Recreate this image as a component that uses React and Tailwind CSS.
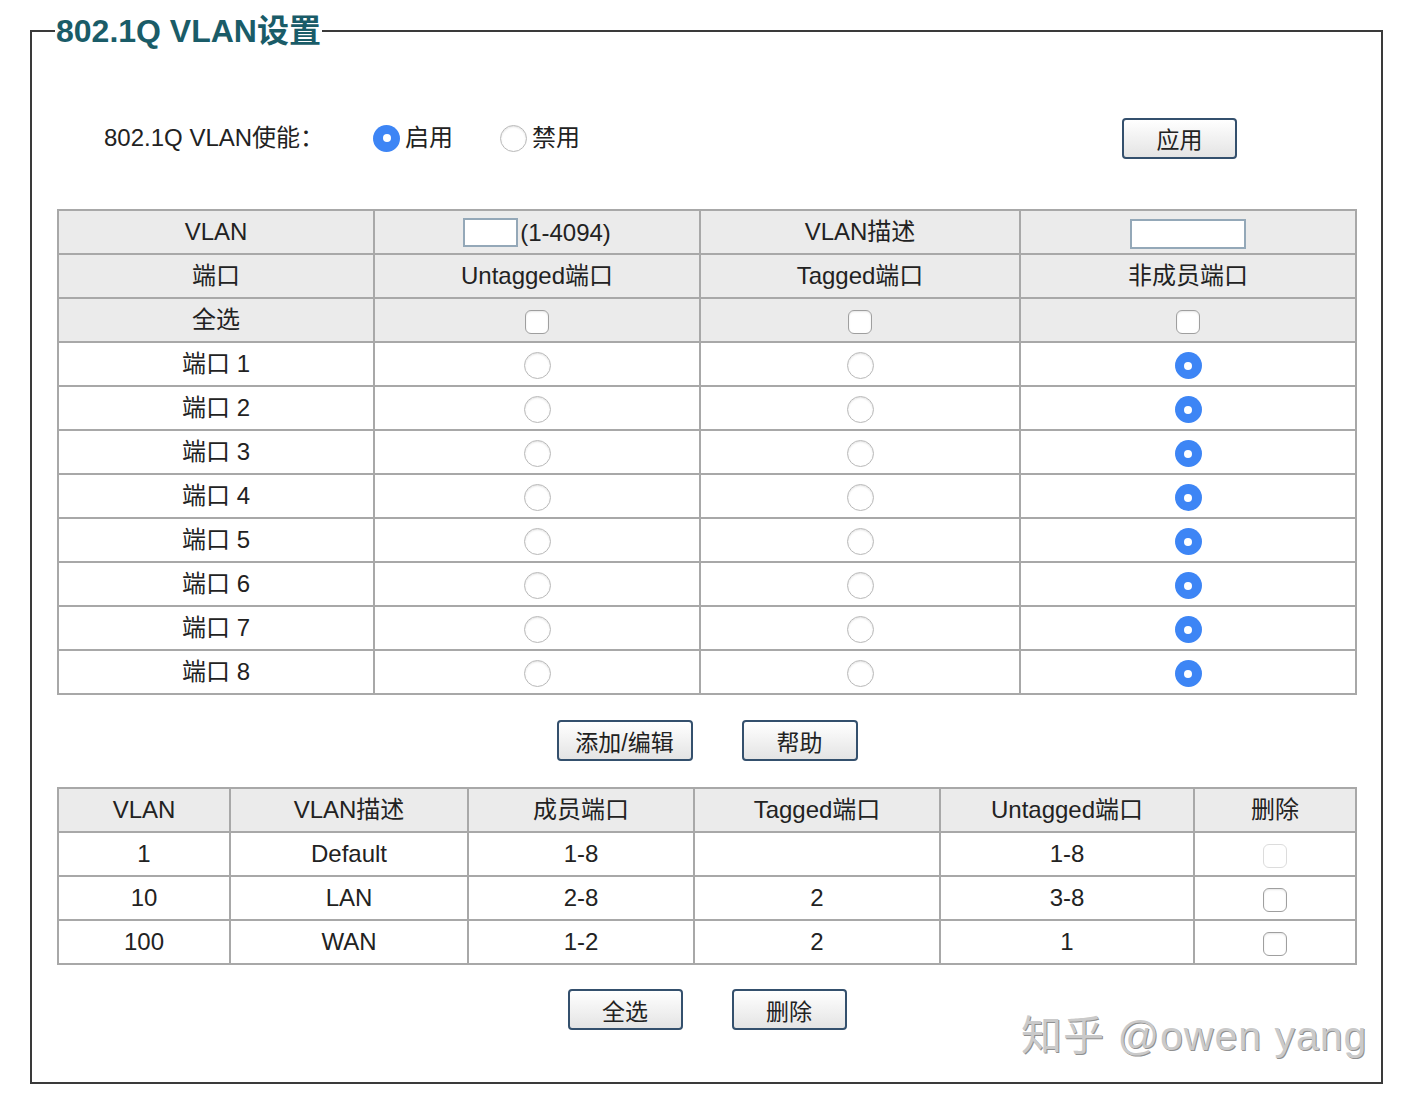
import React from 'react';

const font = { fontFamily: '"Liberation Sans", "Noto Sans CJK SC", sans-serif' };

function Radio({ checked }) {
  return checked ? (
    <span className="inline-flex items-center justify-center w-[27px] h-[27px] rounded-full bg-[#3d85f5] align-middle">
      <span className="w-[8px] h-[8px] rounded-full bg-white" />
    </span>
  ) : (
    <span className="inline-block w-[27px] h-[27px] rounded-full border border-[#b9b9b9] bg-white shadow-[inset_0_1px_2px_rgba(0,0,0,0.12)] align-middle" />
  );
}

function Check({ disabled }) {
  return (
    <span className={`inline-block w-[24px] h-[24px] rounded-[6px] border bg-white align-middle ${disabled ? 'border-[#dcdcdc]' : 'border-[#9f9f9f] shadow-[inset_0_1px_2px_rgba(0,0,0,0.1)]'}`} />
  );
}

function Btn({ children, w = 'w-[115px]' }) {
  return (
    <button className={`${w} h-[41px] rounded-[4px] border-2 border-[#34506d] bg-gradient-to-b from-white to-[#e4e4e4] text-[23px] text-[#222] pt-[5px] leading-none`}>
      {children}
    </button>
  );
}

const td = 'border-2 border-[#a8a8a8] h-[44px] p-0 text-center align-middle';

export default function App() {
  const ports = [1, 2, 3, 4, 5, 6, 7, 8];
  const vlans = [
    { id: '1', desc: 'Default', member: '1-8', tagged: '', untagged: '1-8', disabled: true },
    { id: '10', desc: 'LAN', member: '2-8', tagged: '2', untagged: '3-8' },
    { id: '100', desc: 'WAN', member: '1-2', tagged: '2', untagged: '1' },
  ];

  return (
    <div className="relative w-[1404px] h-[1098px] bg-white pt-[12px] px-[30px] text-[#222]" style={font}>
      <fieldset className="border-2 border-[#3a3a3a] pl-[25px] pr-[24px] pb-[49px] w-[1351px] h-[1072px]">
        <legend className="ml-[-2px] px-[1px] text-[32px] leading-[38px] font-bold text-[#1a5c68]">802.1Q VLAN设置</legend>

        <div className="flex items-center h-[42px] mt-[67px] pl-[47px] pr-[120px] text-[24px]">
          <span>802.1Q VLAN使能：</span>
          <label className="flex items-center ml-[49px] gap-[5px]">
            <Radio checked />
            <span>启用</span>
          </label>
          <label className="flex items-center ml-[47px] gap-[5px]">
            <Radio />
            <span>禁用</span>
          </label>
          <div className="ml-auto"><Btn w="w-[115px]">应用</Btn></div>
        </div>

        <table className="mt-[50px] w-[1298px] border-collapse text-[24px] table-fixed">
          <colgroup>
            <col className="w-[316px]" />
            <col className="w-[326px]" />
            <col className="w-[320px]" />
            <col className="w-[336px]" />
          </colgroup>
          <tbody>
            <tr className="bg-[#ebebeb]">
              <td className={td}>VLAN</td>
              <td className={td}>
                <span className="inline-flex items-center align-middle">
                  <span className="inline-block w-[55px] h-[29px] border-2 border-[#94a8b8] bg-white" />
                  <span className="ml-[2px]">(1-4094)</span>
                </span>
              </td>
              <td className={td}>VLAN描述</td>
              <td className={td}>
                <span className="inline-block w-[116px] h-[30px] border-2 border-[#94a8b8] bg-white align-middle" />
              </td>
            </tr>
            <tr className="bg-[#ebebeb]">
              <td className={td}>端口</td>
              <td className={td}>Untagged端口</td>
              <td className={td}>Tagged端口</td>
              <td className={td}>非成员端口</td>
            </tr>
            <tr className="bg-[#ebebeb]">
              <td className={td}>全选</td>
              <td className={td}><Check /></td>
              <td className={td}><Check /></td>
              <td className={td}><Check /></td>
            </tr>
            {ports.map((p) => (
              <tr key={p} className="bg-white">
                <td className={td}>端口 {p}</td>
                <td className={td}><Radio /></td>
                <td className={td}><Radio /></td>
                <td className={td}><Radio checked /></td>
              </tr>
            ))}
          </tbody>
        </table>

        <div className="flex justify-center gap-[49px] mt-[25px]">
          <Btn w="w-[136px]">添加/编辑</Btn>
          <Btn w="w-[116px]">帮助</Btn>
        </div>

        <table className="mt-[26px] w-[1298px] border-collapse text-[24px] table-fixed">
          <colgroup>
            <col className="w-[172px]" />
            <col className="w-[238px]" />
            <col className="w-[226px]" />
            <col className="w-[246px]" />
            <col className="w-[254px]" />
            <col className="w-[162px]" />
          </colgroup>
          <tbody>
            <tr className="bg-[#ebebeb]">
              <td className={td}>VLAN</td>
              <td className={td}>VLAN描述</td>
              <td className={td}>成员端口</td>
              <td className={td}>Tagged端口</td>
              <td className={td}>Untagged端口</td>
              <td className={td}>删除</td>
            </tr>
            {vlans.map((v) => (
              <tr key={v.id} className="bg-white">
                <td className={td}>{v.id}</td>
                <td className={td}>{v.desc}</td>
                <td className={td}>{v.member}</td>
                <td className={td}>{v.tagged}</td>
                <td className={td}>{v.untagged}</td>
                <td className={td}><Check disabled={v.disabled} /></td>
              </tr>
            ))}
          </tbody>
        </table>

        <div className="flex justify-center gap-[49px] mt-[24px]">
          <Btn>全选</Btn>
          <Btn>删除</Btn>
        </div>
      </fieldset>

      <div className="absolute left-[1021px] top-[1006px] text-[41px] text-[#cacaca] tracking-[1px] [text-shadow:1px_1px_0_#909090] pointer-events-none">
        知乎 @owen yang
      </div>
    </div>
  );
}
